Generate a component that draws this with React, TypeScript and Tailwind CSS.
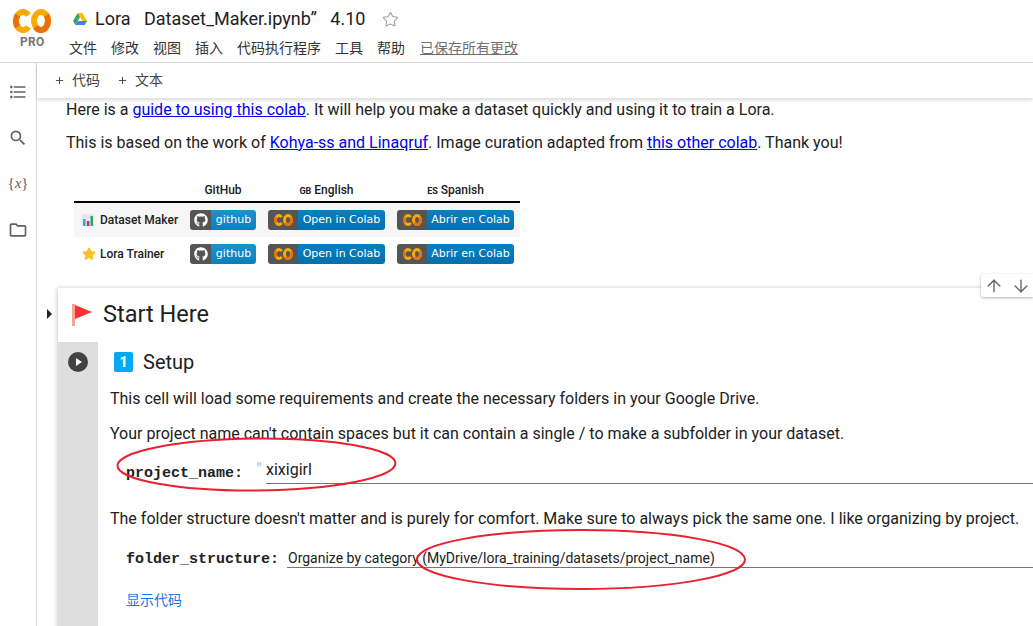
import { ArrowDown, ArrowUp, Plus, Star } from "lucide-react";
import { FaGithub } from "react-icons/fa";
import { MdFormatListBulleted, MdOutlineFolder, MdSearch } from "react-icons/md";

const MENU = ["文件", "修改", "视图", "插入", "代码执行程序", "工具", "帮助"];

function ColabLogo({ className }: { className?: string }) {
  return (
    <svg viewBox="0 0 38 24" className={className} fill="none">
      <path d="M15.4 6.2 A7 9 0 1 0 15.4 17.8" stroke="#f9ab00" strokeWidth="6" />
      <path d="M4.6 6.2 A7 9 0 0 0 4.6 17.8" stroke="#e8710a" strokeWidth="6" />
      <ellipse cx="28" cy="12" rx="7" ry="9" stroke="#f9ab00" strokeWidth="6" />
      <path d="M33.4 6.2 A7 9 0 0 1 22.6 17.8" stroke="#e8710a" strokeWidth="6" />
    </svg>
  );
}

function DriveIcon() {
  return (
    <svg viewBox="0 0 14 14" className="h-[14px] w-[14px]">
      <polygon points="4.7,1 9.3,1 14,9 9.4,9" fill="#fbbc04" />
      <polygon points="4.7,1 7,5 2.4,13 0,9" fill="#34a853" />
      <polygon points="4.6,9 14,9 11.7,13 2.4,13" fill="#4285f4" />
    </svg>
  );
}

function Badge({ kind, label, w }: { kind: "github" | "colab"; label: string; w: string }) {
  return (
    <span className={`flex h-5 overflow-hidden rounded-[3px] text-[11px] text-white ${w}`} style={{ fontFamily: '"DejaVu Sans", sans-serif' }}>
      <span className={`flex items-center justify-center bg-[#555] ${kind === "github" ? "w-[21px]" : "w-[30px]"}`}>
        {kind === "github" ? <FaGithub className="h-[14px] w-[14px] text-white" /> : <ColabLogo className="h-[12px] w-[19px]" />}
      </span>
      <span className={`flex flex-1 items-center justify-center bg-gradient-to-b ${kind === "github" ? "from-[#1a93cf] to-[#0a7fbd]" : "from-[#0a7fbf] to-[#0470ae]"}`}>
        {label}
      </span>
    </span>
  );
}

function BadgeRow({ label, icon, shaded }: { label: string; icon: React.ReactNode; shaded?: boolean }) {
  return (
    <div className={`flex h-[34px] items-center ${shaded ? "bg-[#f6f6f6]" : ""}`}>
      <span className="flex w-[116px] items-center pl-2 text-xs font-medium text-[#212121]">
        <span className="flex w-[18px] justify-start">{icon}</span>
        {label}
      </span>
      <Badge kind="github" label="github" w="w-[66px]" />
      <span className="w-3" />
      <Badge kind="colab" label="Open in Colab" w="w-[117px]" />
      <span className="w-3" />
      <Badge kind="colab" label="Abrir en Colab" w="w-[117px]" />
    </div>
  );
}

export default function App() {
  return (
    <div
      className="relative flex h-[626px] w-[1033px] flex-col overflow-hidden bg-white text-[#212121]"
      style={{ fontFamily: 'Roboto, "Noto Sans CJK SC", sans-serif' }}
    >
      <header className="flex h-[63px] shrink-0 border-b border-[#dadada]">
        <div className="flex w-[69px] flex-col items-start pl-[13px] pt-[9px]">
          <ColabLogo className="h-[24px] w-[38px]" />
          <span className="ml-[7px] mt-[2px] text-xs font-bold leading-[15px] tracking-[0.3px] text-[#757575]">PRO</span>
        </div>
        <div className="flex flex-col">
          <div className="flex h-[38px] items-center pl-1">
            <DriveIcon />
            <span className="ml-2 whitespace-pre text-[18px] leading-none text-[#212121]">Lora&nbsp;&nbsp; Dataset_Maker.ipynb”&nbsp;&nbsp; 4.10</span>
            <Star className="ml-[17px] h-[17px] w-[17px] text-[#9e9e9e]" strokeWidth={1.5} />
          </div>
          <nav className="flex items-center gap-[14px] text-sm leading-5 text-[#333]">
            {MENU.map((m) => (
              <span key={m}>{m}</span>
            ))}
            <span className="ml-px text-[#6f6f6f] underline">已保存所有更改</span>
          </nav>
        </div>
      </header>

      <div className="flex min-h-0 flex-1">
        <aside className="flex w-[37px] shrink-0 flex-col items-center gap-[26px] border-r border-[#dadada] pt-[19px] text-[#616161]">
          <MdFormatListBulleted className="h-5 w-5" />
          <MdSearch className="h-5 w-5" />
          <span className="h-5 text-[15px] leading-[18px]" style={{ fontFamily: '"Liberation Serif", serif' }}>
            {"{"}<i>x</i>{"}"}
          </span>
          <MdOutlineFolder className="h-5 w-5" />
        </aside>

        <main className="relative min-w-0 flex-1">
          <div className="relative z-10 flex h-[35px] items-center gap-[17px] bg-white pb-px pl-[17px] text-sm text-[#444] shadow-[0_2px_4px_rgba(0,0,0,0.15)]">
            <span className="flex items-center gap-[7px]"><Plus className="h-[11px] w-[11px]" />代码</span>
            <span className="flex items-center gap-[7px]"><Plus className="h-[11px] w-[11px]" />文本</span>
          </div>

          <div className="pl-[29px] pt-[2px] text-base leading-5">
            <p>
              Here is a <a className="text-[#0000ee] underline">guide to using this colab</a>. It will help you make a dataset quickly and using it to train a Lora.
            </p>
            <p className="pt-[13px]">
              This is based on the work of <a className="text-[#0000ee] underline">Kohya-ss and Linaqruf</a>. Image curation adapted from <a className="text-[#0000ee] underline">this other colab</a>. Thank you!
            </p>

            <div className="ml-2 mt-[28px] w-[446px]">
              <div className="flex h-[22px] items-center border-b-2 border-black pb-[2px] text-xs font-medium text-[#212121]">
                <span className="w-[116px]" />
                <span className="w-[66px] text-center">GitHub</span>
                <span className="w-3" />
                <span className="w-[117px] text-center"><span className="text-[9px] font-bold">GB</span> English</span>
                <span className="w-3" />
                <span className="w-[117px] text-center"><span className="text-[9px] font-bold">ES</span> Spanish</span>
              </div>
              <BadgeRow
                shaded
                label="Dataset Maker"
                icon={
                  <svg viewBox="0 0 12 12" className="h-3 w-3">
                    <rect width="12" height="12" fill="#e3e6ee" />
                    <rect x="1" y="5" width="2.5" height="7" fill="#3aa8c9" />
                    <rect x="4.8" y="7" width="2.5" height="5" fill="#e0246e" />
                    <rect x="8.5" y="2" width="2.5" height="10" fill="#2fa86a" />
                  </svg>
                }
              />
              <BadgeRow
                label="Lora Trainer"
                icon={<Star className="h-[14px] w-[14px] fill-[#fbc02d] text-[#fbc02d]" />}
              />
            </div>
          </div>

          <div className="relative ml-[21px] mt-[17px] h-[400px] shadow-[-2px_0_4px_rgba(0,0,0,0.12),0_-1px_3px_rgba(0,0,0,0.08)]">
            <span className="absolute left-[-11px] top-[21px] h-0 w-0 border-y-[5px] border-l-[5px] border-y-transparent border-l-[#212121]" />
            <div className="absolute right-0 top-[-14px] z-10 flex h-[23px] w-[52px] items-center gap-[7px] rounded-l-[3px] bg-white pl-[3px] text-[#616161] shadow-[0_1px_3px_rgba(0,0,0,0.3)]">
              <ArrowUp className="h-5 w-5 shrink-0" strokeWidth={1.6} />
              <ArrowDown className="h-5 w-5 shrink-0" strokeWidth={1.6} />
            </div>

            <div className="flex h-[54px] items-center pl-[14px]">
              <svg viewBox="0 0 20 22" className="h-[22px] w-5">
                <rect x="0" y="0" width="3" height="22" fill="#f2a596" />
                <polygon points="3,1 20,8 3,15" fill="#f93030" />
              </svg>
              <h1 className="ml-[11px] text-[23.5px] font-normal">Start Here</h1>
            </div>

            <div className="flex">
              <div className="flex h-[300px] w-10 shrink-0 justify-center bg-[#dedede] pt-[10px]">
                <span className="flex h-5 w-5 items-center justify-center rounded-full bg-[#424242]">
                  <span className="ml-[2px] h-0 w-0 border-y-[4px] border-l-[6px] border-y-transparent border-l-white" />
                </span>
              </div>
              <div className="min-w-0 flex-1 pl-3 text-base leading-5">
                <div className="flex h-10 items-center pl-1">
                  <span className="flex h-5 w-[19px] items-center justify-center rounded-[2px] bg-[#03a9f4] text-sm font-black text-white">1</span>
                  <span className="ml-[10px] text-xl">Setup</span>
                </div>
                <p className="mt-[7px]">This cell will load some requirements and create the necessary folders in your Google Drive.</p>
                <p className="mt-[15px]">Your project name can't contain spaces but it can contain a single / to make a subfolder in your dataset.</p>

                <div className="mt-[14px] flex h-[26px] pl-4">
                  <span className="mt-[6px] w-[130px] text-[15px] font-bold" style={{ fontFamily: '"Liberation Mono", monospace' }}>project_name:</span>
                  <span className="mt-[-2px] w-[10px] text-lg text-[#bdbdbd]">"</span>
                  <span className="flex-1 border-b border-[#757575] text-base">xixigirl</span>
                </div>

                <p className="mt-[25px]">The folder structure doesn't matter and is purely for comfort. Make sure to always pick the same one. I like organizing by project.</p>

                <div className="mt-[19px] flex h-[20px] pl-4">
                  <span className="mt-[2px] w-[161px] text-[15px] font-bold" style={{ fontFamily: '"Liberation Mono", monospace' }}>folder_structure:</span>
                  <span className="flex-1 border-b border-[#757575] pl-px text-sm">Organize by category (MyDrive/lora_training/datasets/project_name)</span>
                </div>

                <a className="ml-4 mt-[22px] block text-sm text-[#1a73e8]">显示代码</a>
              </div>
            </div>
          </div>
        </main>
      </div>

      {/* red marks drawn over the screenshot */}
      <svg className="pointer-events-none absolute left-0 top-0 z-20 h-[626px] w-[1033px]" viewBox="0 0 1033 626" fill="none">
        <ellipse cx="256.5" cy="464.5" rx="139" ry="26" stroke="#e8202f" strokeWidth="2" transform="rotate(-0.5 256.5 464.5)" />
        <ellipse cx="581" cy="559.5" rx="164" ry="29.5" stroke="#e8202f" strokeWidth="2" />
      </svg>
    </div>
  );
}
